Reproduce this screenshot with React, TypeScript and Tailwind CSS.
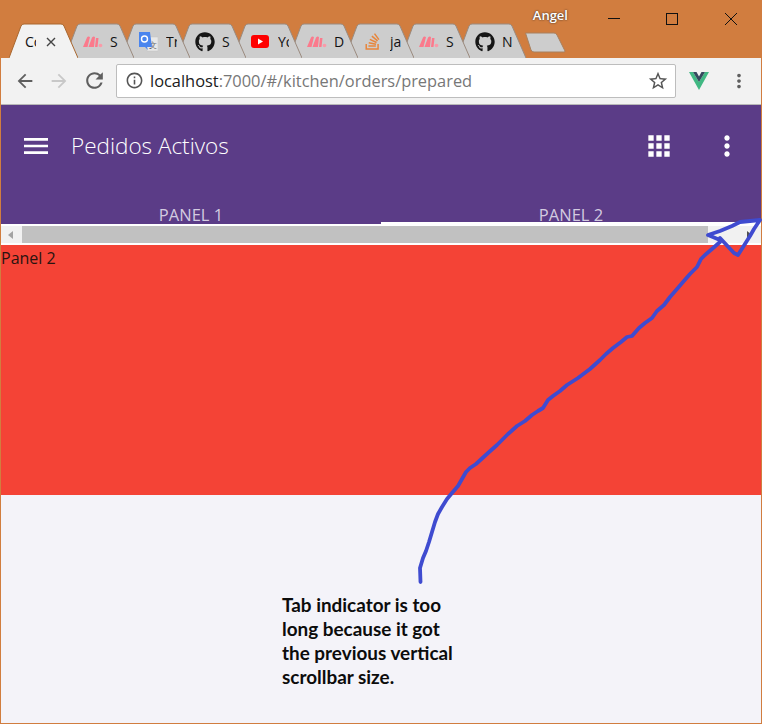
import React from "react";
import { FaGithub, FaStackOverflow } from "react-icons/fa";
import { MdArrowBack, MdArrowForward, MdRefresh, MdStarBorder, MdInfoOutline, MdMenu, MdApps, MdMoreVert } from "react-icons/md";

const ui = "font-['Open_Sans','Noto_Sans',sans-serif]";

function MLogo() {
  return (
    <svg width="20" height="12" viewBox="0 0 20 12">
      <path d="M0 11 L4 1.5 Q5 0 7 1 L4.5 11 Z M5.5 11 L9 1.5 Q10.5 0 12 1 L11 11 Z M13 2 L15.5 2 L14.5 11 L12 11 Z" fill="#fb7a8c" />
      <circle cx="17.5" cy="9.5" r="1.8" fill="#fb9aa8" />
    </svg>
  );
}
function Translate() {
  return (
    <svg width="19" height="20" viewBox="0 0 19 20">
      <rect x="8" y="5" width="11" height="14" fill="#e8e8e8" stroke="#c4c4c4" strokeWidth="0.5" />
      <text x="10" y="16" fontSize="8" fill="#666">文</text>
      <path d="M0 0 H11 L13 15 H8 L9 18 L6 15 H0 Z" fill="#4a85ee" />
      <circle cx="5.5" cy="7" r="3" fill="none" stroke="#fff" strokeWidth="1.4" />
    </svg>
  );
}
function YouTube() {
  return (
    <svg width="18" height="13" viewBox="0 0 18 13">
      <rect width="18" height="13" rx="3" fill="#f00" />
      <path d="M7 3.5 L12 6.5 L7 9.5 Z" fill="#fff" />
    </svg>
  );
}

const tabs = [
  { t: "S", icon: <MLogo />, z: "z-[8]" },
  { t: "Tr", icon: <Translate />, z: "z-[7]" },
  { t: "S", icon: <FaGithub size={20} color="#161616" />, z: "z-[6]" },
  { t: "Yo", icon: <YouTube />, z: "z-[5]" },
  { t: "D", icon: <MLogo />, z: "z-[4]" },
  { t: "ja", icon: <FaStackOverflow size={19} color="#e8853a" />, z: "z-[3]" },
  { t: "S", icon: <MLogo />, z: "z-[2]" },
  { t: "N", icon: <FaGithub size={20} color="#161616" />, z: "z-[1]" },
];

function TabShape({ fill, stroke }: { fill: string; stroke: string }) {
  return (
    <svg className="absolute inset-0" width="69" height="35" viewBox="0 0 69 35">
      <path d="M0 35 L12 3 Q13 1 15 1 L52 1 Q54 1 55 3 L69 35 Z" fill={fill} />
      <path d="M0 35 L12 3 Q13 1 15 1 L52 1 Q54 1 55 3 L69 35" fill="none" stroke={stroke} strokeWidth="1" />
    </svg>
  );
}

function Tab({ t, icon, z }: { t: string; icon: React.ReactNode; z: string }) {
  return (
    <div className={`relative w-[69px] h-[35px] -ml-[13px] shrink-0 ${z}`}>
      <TabShape fill="#cdcdcd" stroke="#9a8a7e" />
      <div className="relative flex items-center h-full pt-[2px]">
        <div className="w-[27px] ml-[18px] flex items-center">{icon}</div>
        <span className="w-[11px] overflow-hidden text-[14px] leading-5 text-[#111]">{t}</span>
      </div>
    </div>
  );
}

export default function App() {
  return (
    <div className={`w-[762px] h-[724px] bg-[#d17d3f] flex flex-col overflow-hidden relative ${ui}`}>
      {/* title bar */}
      <div className="h-[58px] flex items-end pl-[9px] relative shrink-0">
        <div className="relative w-[69px] h-[35px] z-10 shrink-0">
          <TabShape fill="#f2f2f2" stroke="#a8672f" />
          <div className="relative flex items-center h-full pl-[16px] pt-[2px]">
            <span className="w-[11px] overflow-hidden text-[14px] leading-5 text-[#111]">Cc</span>
            <svg className="ml-[10px]" width="10" height="10" viewBox="0 0 10 10">
              <path d="M1 1 L9 9 M9 1 L1 9" stroke="#444" strokeWidth="1.4" />
            </svg>
          </div>
        </div>
        {tabs.map((x, i) => (
          <Tab key={i} {...x} />
        ))}
        <svg className="-ml-[2px] mb-[5px] shrink-0" width="43" height="21" viewBox="0 0 43 21">
          <path d="M1.5 1 L30 1 Q32 1 33 3 L41 19 Q41 20 40 20 L10 20 Q8 20 7 18 Z" fill="#cdcdcd" stroke="#a8805f" strokeWidth="1" />
        </svg>
        <div className="flex-1 -ml-[40px] self-start flex items-start justify-end">
          <span className="mt-[6px] mr-[39px] text-[13px] font-semibold leading-[18px] text-white [text-shadow:0_0_2px_#222]">Angel</span>
          <svg className="mt-[12px] mr-[25px] shrink-0" width="130" height="14" viewBox="0 0 130 14" fill="none" stroke="#111" strokeWidth="1">
            <path d="M1 6.5 H13" />
            <rect x="59.5" y="1.5" width="11" height="11" />
            <path d="M118 1 L130 13 M130 1 L118 13" />
          </svg>
        </div>
      </div>

      {/* browser toolbar */}
      <div className="h-[47px] mx-px bg-[#f2f2f2] border-b border-[#b8b8b8] flex items-center shrink-0 pb-[1px]">
        <div className="w-[115px] flex items-center pl-[13px] gap-[12px]">
          <MdArrowBack size={22} color="#5f5f5f" />
          <MdArrowForward size={22} color="#c8c8c8" />
          <MdRefresh size={25} color="#5f5f5f" />
        </div>
        <div className="w-[560px] h-[34px] bg-white border border-[#bdbdbd] rounded-[2px] flex items-center pl-[8px] pr-[6px]">
          <MdInfoOutline size={19} color="#555" />
          <span className="ml-[6px] text-[16.4px] leading-6 pt-[1px] text-[#202020] whitespace-nowrap">
            localhost<span className="text-[#777]">:7000/#/kitchen/orders/prepared</span>
          </span>
          <MdStarBorder className="ml-auto" size={22} color="#555" />
        </div>
        <svg className="ml-[13px]" width="20" height="18" viewBox="0 0 20 18">
          <path d="M0 0 H4 L10 10 L16 0 H20 L10 18 Z" fill="#41b883" />
          <path d="M4 0 H7.5 L10 4.5 L12.5 0 H16 L10 10 Z" fill="#35495e" />
        </svg>
        <MdMoreVert className="ml-[19px]" size={22} color="#5f5f5f" />
      </div>

      {/* page */}
      <div className="flex-1 mx-px mb-px bg-[#f4f3f9] flex flex-col min-h-0">
        <div className="bg-[#5b3c87] text-white shrink-0">
          <div className="h-[82px] flex items-center">
            <MdMenu className="ml-[19px]" size={32} color="#fff" />
            <span className="ml-[19px] text-[22.5px] font-light leading-8 text-white">Pedidos Activos</span>
            <MdApps className="ml-auto" size={32} color="#fff" />
            <MdMoreVert className="ml-[36px] mr-[18px]" size={32} color="#fff" />
          </div>
          <div className="grid grid-cols-2 grid-rows-[37px] h-[37px] text-[16.5px] text-[#d3cbe0] leading-6 text-center overflow-hidden">
            <div className="pt-[16px]">PANEL 1</div>
            <div className="pt-[16px] border-b-2 border-white">PANEL 2</div>
          </div>
        </div>

        {/* horizontal scrollbar */}
        <div className="bg-white pt-[2px] pb-[2px] shrink-0">
          <div className="h-[17px] bg-[#f1f1f1] flex items-center">
            <div className="w-[21px] flex justify-center pr-[3px]">
              <div className="w-0 h-0 border-y-[4px] border-y-transparent border-r-[5px] border-r-[#a3a3a3]" />
            </div>
            <div className="w-[686px] h-full bg-[#c1c1c1]" />
            <div className="flex-1 flex justify-end pr-[9px]">
              <div className="w-0 h-0 border-y-[4px] border-y-transparent border-l-[5px] border-l-[#505050]" />
            </div>
          </div>
        </div>

        {/* panel */}
        <div className="h-[250px] bg-[#f44336] text-[16px] leading-[26px] text-[#2a1410] shrink-0">Panel 2</div>

        {/* annotation */}
        <div className="pl-[281px] pt-[98px] font-['Lato',sans-serif] font-bold text-[18.9px] leading-6 text-[#0c0c0c]">
          Tab indicator is too<br />long because it got<br />the previous vertical<br />scrollbar size.
        </div>
      </div>

      {/* hand-drawn arrow */}
      <svg className="absolute inset-0 pointer-events-none z-20" width="762" height="724" viewBox="0 0 762 724" fill="none" stroke="#3f4bd0" strokeWidth="3.8" strokeLinejoin="round" strokeLinecap="round">
        <path d="M420.5 582 L420 568 L423 558 L426 551 L429 542 L432 532 L435 522 L438 514 L442 507 L447 499 L452 493 L458 486 L462 479 L466 472 L470 468 L476 464 L488 453 L497 445 L508 434 L517 426 L525 421 L532 415 L538 411 L543 408 L548 400 L553 396 L560 391 L567 385 L578 378 L590 369 L600 360 L606 354 L613 348 L621 342 L627 337 L632 336 L639 328 L645 323 L652 318 L657 311 L664 305 L670 297 L677 289 L683 282 L690 274 L697 267 L701 259 L705 255 L712 249 L720 242" />
        <path d="M720 240 L708 235 L720 231 L732 226 L740 222 L760 220 L754 229 L750 236 L738 255 L734 253 L720 238" />
      </svg>
    </div>
  );
}
